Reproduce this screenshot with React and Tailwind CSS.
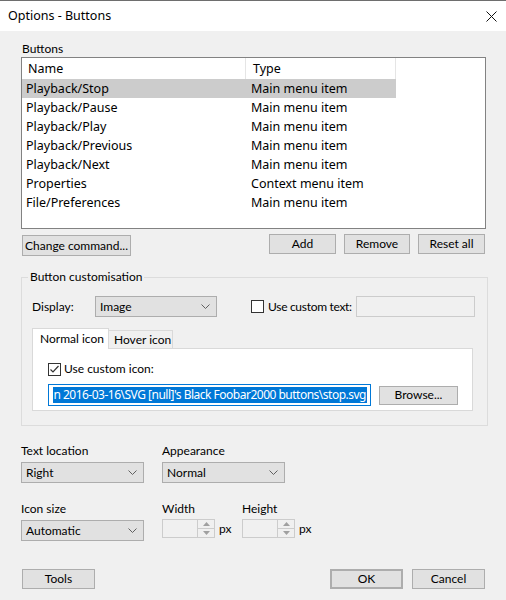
import React from "react"

const rows = [
  ["Playback/Stop", "Main menu item"],
  ["Playback/Pause", "Main menu item"],
  ["Playback/Play", "Main menu item"],
  ["Playback/Previous", "Main menu item"],
  ["Playback/Next", "Main menu item"],
  ["Properties", "Context menu item"],
  ["File/Preferences", "Main menu item"],
]

function Btn({ children, className = "" }) {
  return (
    <div className={"flex items-center justify-center bg-[#e1e1e1] border border-[#adadad] leading-none " + className}>
      {children}
    </div>
  )
}

function Chevron() {
  return (
    <svg width="9" height="5" viewBox="0 0 9 5" className="shrink-0">
      <path d="M0.5 0.5 L4.5 4.5 L8.5 0.5" fill="none" stroke="#606060" strokeWidth="1" />
    </svg>
  )
}

function Select({ value, className = "" }) {
  return (
    <div className={"flex items-center justify-between bg-[#e1e1e1] border border-[#adadad] pl-[4px] pr-[6px] h-[21px] shrink-0 " + className}>
      <span>{value}</span>
      <Chevron />
    </div>
  )
}

function Checkbox({ checked }) {
  return (
    <div className="w-[13px] h-[13px] border border-[#333333] bg-white shrink-0 flex items-center justify-center">
      {checked && (
        <svg width="11" height="11" viewBox="0 0 11 11">
          <path d="M1.5 5.5 L4 8 L9.5 2" fill="none" stroke="#333333" strokeWidth="1.2" />
        </svg>
      )}
    </div>
  )
}

function Spin() {
  return (
    <div className="flex items-center">
      <div className="flex w-[53px] h-[19px] border border-[#cccccc] bg-[#f0f0f0]">
        <div className="flex-1" />
        <div className="w-[17px] flex flex-col border-l border-[#cccccc]">
          <div className="flex-1 flex items-center justify-center border-b border-[#cccccc]">
            <svg width="7" height="4" viewBox="0 0 7 4"><path d="M0 4 L3.5 0 L7 4Z" fill="#a0a0a0" /></svg>
          </div>
          <div className="flex-1 flex items-center justify-center">
            <svg width="7" height="4" viewBox="0 0 7 4"><path d="M0 0 L3.5 4 L7 0Z" fill="#a0a0a0" /></svg>
          </div>
        </div>
      </div>
      <span className="ml-[4px]">px</span>
    </div>
  )
}

export default function App() {
  return (
    <div className="w-[506px] h-[600px] bg-[#f0f0f0] text-[12px] leading-[16px] text-black overflow-hidden whitespace-nowrap font-['Lato',sans-serif]">
      {/* title bar */}
      <div className="h-[31px] bg-white border-t border-[#6e6e6e] flex items-center justify-between pl-[8px] pr-[9px]">
        <span className="text-[12.5px] font-['Noto_Sans',sans-serif]">Options - Buttons</span>
        <svg width="11" height="11" viewBox="0 0 11 11">
          <path d="M0.5 0.5 L10.5 10.5 M10.5 0.5 L0.5 10.5" stroke="#111" strokeWidth="1" />
        </svg>
      </div>

      <div className="pl-[21px] pr-[20px]">
        <div className="mt-[10px] pl-[1px]">Buttons</div>

        {/* list */}
        <div className="h-[172px] border border-[#828282] bg-white text-[12.5px] font-['Noto_Sans',sans-serif]">
          <div className="flex h-[21px] items-center">
            <div className="w-[224px] h-full flex items-center pl-[6px] border-r border-[#e5e5e5]">Name</div>
            <div className="w-[150px] h-full flex items-center pl-[7px] border-r border-[#e5e5e5]">Type</div>
          </div>
          {rows.map(([name, type], i) => (
            <div key={name} className={"flex w-[374px] h-[19px] items-center " + (i === 0 ? "bg-[#cccccc]" : "")}>
              <div className="w-[224px] pl-[4px]">{name}</div>
              <div className="w-[150px] pl-[5px]">{type}</div>
            </div>
          ))}
        </div>

        {/* buttons row */}
        <div className="flex justify-between items-start mt-[5px] pl-[1px] pr-[1px]">
          <Btn className="w-[109px] h-[21px] mt-[1px]">Change command...</Btn>
          <div className="flex gap-[8px]">
            <Btn className="w-[67px] h-[20px]">Add</Btn>
            <Btn className="w-[66px] h-[20px]">Remove</Btn>
            <Btn className="w-[67px] h-[20px]">Reset all</Btn>
          </div>
        </div>

        {/* group box */}
        <fieldset className="mt-[13px] border border-[#dcdcdc] h-[157px] pl-[10px] pr-[12px]">
          <legend className="ml-[-4px] px-[2px]">Button customisation</legend>
          <div className="flex items-center mt-[11px] h-[21px]">
            <span className="w-[63px] shrink-0">Display:</span>
            <Select value="Image" className="w-[122px]" />
            <div className="ml-[34px] flex items-center shrink-0 w-[105px]">
              <Checkbox />
              <span className="ml-[4px] tracking-[-0.3px]">Use custom text:</span>
            </div>
            <div className="w-[119px] h-[21px] border border-[#cccccc] bg-[#f0f0f0] shrink-0" />
          </div>

          {/* tabs */}
          <div className="mt-[11px] flex items-end">
            <div className="w-[77px] h-[21px] bg-white border border-b-0 border-[#d9d9d9] pl-[7px] flex items-center relative z-10 mb-[-1px]">Normal icon</div>
            <div className="w-[64px] h-[18px] bg-[#f0f0f0] border border-l-0 border-b-0 border-[#d9d9d9] pl-[5px] flex items-center">Hover icon</div>
          </div>
          <div className="w-[441px] h-[63px] bg-white border border-[#d9d9d9] pl-[15px]">
            <div className="flex items-center mt-[12px]">
              <Checkbox checked />
              <span className="ml-[3px]">Use custom icon:</span>
            </div>
            <div className="flex items-center mt-[7px]">
              <div className="w-[323px] h-[22px] border border-[#0078d7] bg-white flex items-center justify-end pr-[3px] overflow-hidden font-['Noto_Sans',sans-serif]">
                <span className="bg-[#0078d7] text-white pr-[1px] tracking-[-0.5px]">n 2016-03-16\SVG [null]'s Black Foobar2000 buttons\stop.svg</span>
              </div>
              <Btn className="ml-[8px] w-[79px] h-[19px]">Browse...</Btn>
            </div>
          </div>
        </fieldset>

        {/* bottom options */}
        <div className="grid grid-cols-[141px_80px_1fr] mt-[17px]">
          <div>
            <div>Text location</div>
            <Select value="Right" className="mt-[3px] w-[123px]" />
          </div>
          <div className="col-span-2">
            <div>Appearance</div>
            <Select value="Normal" className="mt-[3px] w-[123px]" />
          </div>
          <div className="mt-[18px]">
            <div>Icon size</div>
            <Select value="Automatic" className="mt-[3px] w-[123px]" />
          </div>
          <div className="mt-[18px]">
            <div>Width</div>
            <div className="mt-[2px]"><Spin /></div>
          </div>
          <div className="mt-[18px]">
            <div>Height</div>
            <div className="mt-[2px]"><Spin /></div>
          </div>
        </div>

        {/* footer */}
        <div className="flex justify-between mt-[28px] pl-[1px] pr-[1px]">
          <Btn className="w-[73px] h-[20px]">Tools</Btn>
          <div className="flex gap-[9px]">
            <Btn className="w-[73px] h-[20px] border-2 border-[#0078d7]">OK</Btn>
            <Btn className="w-[73px] h-[20px]">Cancel</Btn>
          </div>
        </div>
      </div>
    </div>
  )
}
